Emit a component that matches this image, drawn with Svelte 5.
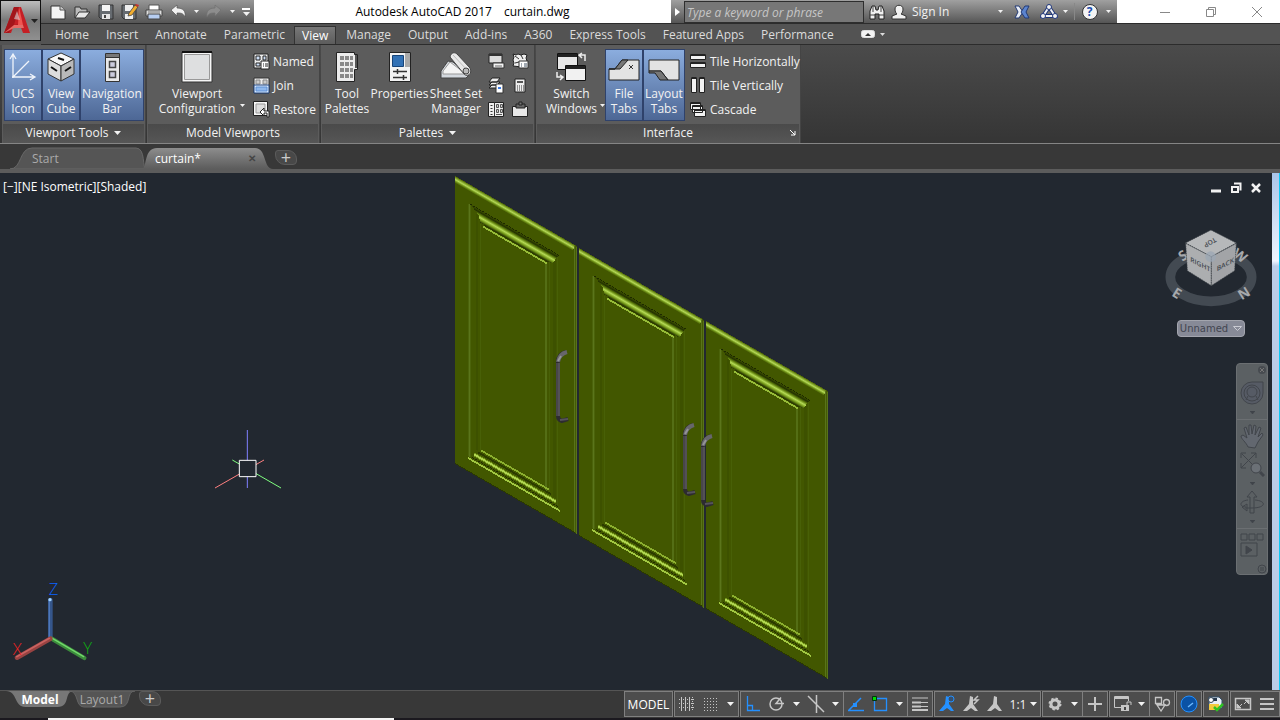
<script>
  let activeTab = $state('View');
  let search = $state('');

  const tabs = [
    'Home', 'Insert', 'Annotate', 'Parametric', 'View', 'Manage', 'Output',
    'Add-ins', 'A360', 'Express Tools', 'Featured Apps', 'Performance'
  ];

  const quickAccess = ['new', 'open', 'save', 'saveas', 'print', 'undo', 'caret', 'redo', 'caret', 'more'];

  // x/y is the top left corner of each door, w its width
  const doors = [
    { x: 455, y: 176, w: 122 },
    { x: 579, y: 248, w: 125 },
    { x: 706, y: 321, w: 122 }
  ];
  const handles = [
    { x: 558, y: 352 },
    { x: 685, y: 425 },
    { x: 703, y: 436 }
  ];

  const paletteTools = ['command line', 'markup set', 'layers', 'calculator', 'design center', 'clipboard'];

  const statusGroups = [
    ['grid', 'snap', 'drop'],
    ['ortho', 'polar', 'drop', 'iso', 'drop', 'sep', 'track', 'osnap', 'drop', 'sep', 'weight'],
    ['annovis', 'annoauto', 'anno', 'scale'],
    ['gear', 'drop', 'sep', 'plus'],
    ['lock', 'drop', 'sep', 'isolate'],
    ['hardware'],
    ['plot'],
    ['clean', 'menu']
  ];
</script>

{#snippet caret()}
  <svg class="caret" width="7" height="4" viewBox="0 0 7 4"><path d="M0 0h7L3.5 4z" fill="currentColor" /></svg>
{/snippet}

{#snippet quickIcon(name)}
  <svg width="18" height="18" viewBox="0 0 18 18">
    {#if name === 'new'}
      <path d="M2 3h9l5 4v9H2z" fill="#f4f4f4" stroke="#333" />
      <path d="M11 3v4h5" fill="#ccc" stroke="#555" />
    {:else if name === 'open'}
      <path d="M2 15V4h5l1 2h6v3" fill="#bbb" stroke="#333" />
      <path d="M2 15l4-6h11l-5 6z" fill="#e8e8e8" stroke="#333" />
    {:else if name === 'save'}
      <path d="M2 2h14v14H4l-2-2z" fill="#666b70" stroke="#333" />
      <path d="M5 2h8v6H5z" fill="#f4f4f4" /><path d="M5 11h8v5H5z" fill="#e5e5e5" />
      <path d="M7 12h2v3H7z" fill="#444" />
    {:else if name === 'saveas'}
      <path d="M1 2h14v14H3l-2-2z" fill="#666b70" stroke="#333" />
      <path d="M4 2h8v6H4zM4 11h8v5H4z" fill="#eee" />
      <path d="M7 13l1-3 6-8 3 2-6 8z" fill="#f2ad2e" stroke="#444" stroke-width=".8" />
      <path d="M14 2l3 2 1-2-3-1z" fill="#c9302c" />
    {:else if name === 'print'}
      <path d="M4 2h10v6H4z" fill="#fff" stroke="#555" />
      <path d="M1 7h16v6H1z" fill="#dedede" stroke="#444" />
      <path d="M3 11h12v5H3z" fill="#b7cdf0" stroke="#444" /><path d="M3 9h12" stroke="#777" />
    {:else if name === 'undo'}
      <path d="M2 7l6-5v3c6 0 9 3 8 9-2-4-4-4-8-4v3z" fill="#f1f1f1" stroke="#555" stroke-width=".7" />
    {:else}
      <path d="M16 7l-6-5v3C4 5 1 8 2 14c2-4 4-4 8-4v3z" fill="#8d8d8d" stroke="#707070" stroke-width=".7" />
    {/if}
  </svg>
{/snippet}

{#snippet paletteIcon(name)}
  <svg width="18" height="18" viewBox="0 0 18 18">
    {#if name === 'command line'}
      <path d="M2 2h13v9H2z" fill="#ddd" stroke="#222" /><path d="M2 2h13v2H2z" fill="#333" />
      <path d="M6 11h11v5H6z" fill="#f3f3f3" stroke="#333" /><path d="M8 14h7" stroke="#666" />
    {:else if name === 'markup set'}
      <path d="M2 2l3 1 2-1 3 1 3-1 3 1-1 3 1 3-2 2-3 4-9-1 1-3-1-3 1-3z" fill="#eee" stroke="#222" />
      <path d="M4 4l4 3M10 3l2 4M4 11l4-1" stroke="#333" />
      <path d="M8 9h9v7H8z" fill="#fff" stroke="#333" /><path d="M10 12h1m2 0h3m-6 2h1m2 0h3" stroke="#456" />
    {:else if name === 'layers'}
      <path d="M2 12l3-3h8l-3 3zM2 9l3-3h8l-3 3zM2 6l3-4h8l-3 4z" fill="#eee" stroke="#222" />
      <path d="M9 8h7v9H9z" fill="#fff" stroke="#333" /><path d="M11 11h3v2h-3z" fill="#3f7ee8" />
    {:else if name === 'calculator'}
      <path d="M4 3h10v13H4z" fill="#eee" stroke="#222" /><path d="M6 5h6v2H6z" fill="#555" />
      <path d="M6 10h7m-7 2h7m-7 2h7" stroke="#333" stroke-dasharray="1 1" />
    {:else if name === 'design center'}
      <path d="M1.500 2.500h15v14h-15z" fill="#eee" stroke="#222" /><path d="M7.500 2v14" stroke="#333" />
      <path d="M4.500 5v10" stroke="#333" stroke-width="2" stroke-dasharray="1 2" />
      <path d="M9.500 4.500h2v3h-2zm4 0h2v3h-2zm-4 5h2v3h-2zm4 0h2v3h-2zM9 14.500h6" fill="#ccc" stroke="#555" />
    {:else}
      <path d="M1.500 6.500h15v10h-15z" fill="#e8e8e8" stroke="#222" /><path d="M5 4h9v4H5z" fill="#666" stroke="#222" />
      <path d="M8 2h3v3H8z" fill="#777" stroke="#222" />
    {/if}
  </svg>
{/snippet}

{#snippet statusIcon(name)}
  <svg width="24" height="24" viewBox="0 0 24 24" fill="none" stroke="#c6c6c6">
    {#if name === 'grid'}
      <path d="M6.500 5v14m4-14v14m4-14v14" />
      <path d="M17.500 5v14M4 7.500h15M4 11.500h15M4 15.500h15" stroke-dasharray="1 1" />
    {:else if name === 'snap'}
      <path d="M5 6.500h14M5 9.500h14M5 12.500h14M5 15.500h14M5 18.500h14" stroke-dasharray="1 2" />
    {:else if name === 'ortho'}
      <path d="M6.500 4v14.500H19M6.500 13.500h5v5" stroke="#2490ff" stroke-width="1.300" />
    {:else if name === 'polar'}
      <circle cx="11" cy="12" r="6" stroke-width="1.500" /><path d="M19 11.500h-8l5-6" stroke-width="1.500" />
    {:else if name === 'iso'}
      <path d="M4 4l16 16M12.500 3v18" stroke-width="1.500" />
    {:else if name === 'track'}
      <path d="M4 18.500h16M5 18L17 6" stroke="#2490ff" stroke-width="1.500" /><path d="M9 11h4v4H9z" fill="#2490ff" stroke="none" />
    {:else if name === 'osnap'}
      <path d="M6.500 6.500h12v12h-12z" stroke="#2490ff" stroke-width="1.300" /><path d="M4.500 4.500h4v4h-4z" fill="#0d0" stroke="#031" />
    {:else if name === 'weight'}
      <path d="M4 6h16" /><path d="M4 10.500h9" stroke-width="2" /><path d="M13 10.500h7" /><path d="M4 14.500h16" stroke-width="1" /><path d="M4 14.500h9M4 18h16" stroke-width="2" />
    {:else if name === 'annovis' || name === 'annoauto' || name === 'anno'}
      <g fill={name === 'annovis' ? '#2490ff' : '#c6c6c6'} stroke="none">
        <path d="M11 4l3 1v7l5 7h-3l-4-3-4 3H4l6-7z" />
      </g>
      {#if name === 'annovis'}<circle cx="16" cy="7" r="3" fill="#38506c" stroke="#2490ff" />{/if}
      {#if name === 'annoauto'}<path d="M19 4l-4 4h4l-4 4" stroke-width="1.500" />{/if}
    {:else if name === 'gear'}
      <circle cx="12" cy="12" r="4" stroke-width="3" /><circle cx="12" cy="12" r="5.500" stroke-width="2" stroke-dasharray="2.300 2" />
    {:else if name === 'plus'}
      <path d="M5 12h14M12 5v14" stroke-width="2" />
    {:else if name === 'lock'}
      <path d="M11 15.500H4.500v-11h14V9" /><path d="M4 6h15" stroke-width="2" />
      <path d="M11 13h8v6h-8z" fill="#c6c6c6" stroke="none" /><path d="M17 13v-3h4v3" /><path d="M14 15h2v3h-2z" fill="#444" stroke="none" />
    {:else if name === 'isolate'}
      <path d="M5.500 5.500h6v6h-6zM11 19l-4-6h8z" stroke-width="1.300" /><circle cx="16.500" cy="10.500" r="3" stroke-width="1.300" />
    {:else if name === 'hardware'}
      <circle cx="12" cy="12" r="8" fill="#0a52a5" stroke="#2490ff" /><path d="M11 15l5-4" stroke="#6cbaff" stroke-width="1.500" />
    {:else if name === 'plot'}
      <path d="M5 5h10l3 3v8H5z" fill="#e8eef5" stroke="#33506d" /><path d="M8 6h5v3H8z" fill="#26374a" stroke="none" />
      <circle cx="7" cy="8" r="2.500" fill="#fff" stroke="#345" /><path d="M5 12h10v6H5z" fill="#f3ca3e" stroke="none" />
      <path d="M10 15l3 3 6-6" stroke="#2fc323" stroke-width="2.500" />
    {:else if name === 'clean'}
      <path d="M4.500 6.500h15v11h-15z" stroke-width="1.500" /><path d="M14 8h4v4zM6 12v4h4zM13 12l3-3M8 15l3-3" fill="#c6c6c6" />
    {:else}
      <path d="M5 7h14M5 12h14M5 17h14" stroke-width="2" />
    {/if}
  </svg>
{/snippet}

<div class="app">
  <header>
    <button class="logo" aria-label="Application menu">
      <svg width="28" height="34" viewBox="0 0 28 34">
        <path d="M1 29L11 3h7l9 26h-7l-3-8h-6l-3 8z" fill="#c51f25" />
        <path d="M11 3l5 0-5 18 8-1 2 4H9l-3 5H1z" fill="#a3161b" />
        <path d="M16 3l4 18h-5z" fill="#ef5550" /><path d="M11 15l3-8 3 9z" fill="#d9d9d9" opacity=".6" />
        <path d="M1 29l10-8h9l1 3H11z" fill="#e66a65" />
      </svg>
      {@render caret()}
    </button>
    <div class="title-row">
      <div class="quick">
        {#each quickAccess as name}
          {#if name === 'caret'}
            <button class="tiny" aria-label="History">{@render caret()}</button>
          {:else if name === 'more'}
            <button class="more" aria-label="Customize"><i></i>{@render caret()}</button>
          {:else}
            <button aria-label={name}>{@render quickIcon(name)}</button>
          {/if}
        {/each}
      </div>
      <div class="title"><span>Autodesk AutoCAD 2017</span><span>curtain.dwg</span></div>
      <div class="info">
        <button class="expand" aria-label="Collapse search"><svg width="5" height="8" viewBox="0 0 5 8"><path d="M0 0l5 4-5 4z" fill="#fff" /></svg></button>
        <input type="text" aria-label="Search" placeholder="Type a keyword or phrase" bind:value={search} />
        <button class="find" aria-label="Find">
          <svg width="18" height="18" viewBox="0 0 18 18">
            <path d="M2 8l2-5h3l1 4h2l1-4h3l2 5v8h-5v-5H7v5H2z" fill="#f0f0f0" stroke="#222" />
            <path d="M5 3v6m8-6v6M2 12h5m4 0h5" stroke="#444" />
          </svg>
        </button>
        <button class="sign">
          <svg width="18" height="18" viewBox="0 0 18 18"><path d="M5 6c0-5 8-5 8 0 0 3-1 4-2 5l5 2v3H2v-3l5-2C6 10 5 9 5 6z" fill="#f1f1f1" stroke="#333" /></svg>
          <span>Sign In</span>
          {@render caret()}
        </button>
        <button class="exchange" aria-label="Exchange">
          <svg width="16" height="14" viewBox="0 0 16 14"><path d="M1 1h4l4 6-4 6H1l3-6z" fill="#e8edf5" stroke="#233a75" /><path d="M15 1h-4L7 7l4 6h4l-3-6z" fill="#5b84cf" stroke="#233a75" /></svg>
        </button>
        <button class="connect" aria-label="Connect">
          <svg width="18" height="16" viewBox="0 0 18 16">
            <path d="M9 3l6 9H3z" fill="none" stroke="#20377b" stroke-width="4" /><path d="M9 3l6 9H3z" fill="none" stroke="#f3f3f3" stroke-width="2" />
            <g fill="#f3f3f3" stroke="#20377b"><circle cx="9" cy="3" r="2.500" /><circle cx="3" cy="12" r="2.500" /><circle cx="15" cy="12" r="2.500" /></g>
          </svg>
          {@render caret()}
        </button>
        <button class="help" aria-label="Help"><b>?</b>{@render caret()}</button>
      </div>
      <div class="window">
        <button aria-label="Minimize"><svg width="12" height="12" viewBox="0 0 12 12"><path d="M1 6.500h10" /></svg></button>
        <button aria-label="Restore"><svg width="12" height="12" viewBox="0 0 12 12"><path d="M1.500 3.500h7v7h-7zM3.500 3V1.500h7v7H9" /></svg></button>
        <button aria-label="Close"><svg width="12" height="12" viewBox="0 0 12 12"><path d="M1 1l10 10M11 1L1 11" /></svg></button>
      </div>
    </div>
    <nav class="tabs">
      {#each tabs as tab}
        <button class:active={tab === activeTab} onclick={() => (activeTab = tab)}>{tab}</button>
      {/each}
      <button class="collapse" aria-label="Minimize ribbon">
        <svg width="14" height="8" viewBox="0 0 14 8"><rect x=".5" y=".5" width="13" height="7" rx="2" fill="#f3f3f3" stroke="#ddd" /><path d="M4 6l3-3 3 3z" fill="#333" /></svg>
        {@render caret()}
      </button>
    </nav>
  </header>

  <section class="ribbon">
    <div class="panel viewport-tools">
      <div class="tools">
        <button class="big on">
          <svg width="32" height="32" viewBox="0 0 32 32"><path d="M6 27V4M3 8l3-5 3 5M5 26h22m-4-3l5 3-5 3M6 26L22 10" fill="none" stroke="#f0f4fa" stroke-width="1.300" /></svg>
          <span>UCS<br />Icon</span>
        </button>
        <button class="big on">
          <svg width="32" height="32" viewBox="0 0 32 32" stroke="#333" stroke-linejoin="round">
            <path d="M16 2l13 6-13 7L3 8z" fill="#f8f8f8" /><path d="M3 8l13 7v15L3 23z" fill="#ddd" /><path d="M29 8l-13 7v15l13-7z" fill="#b9b9b9" />
            <path d="M13 7l6 2M6 16l6 4M20 20l6-4" stroke="#111" stroke-width="2" />
          </svg>
          <span>View<br />Cube</span>
        </button>
        <button class="big on">
          <svg width="32" height="32" viewBox="0 0 32 32">
            <path d="M9.500 2.500h14v28h-14z" fill="#e9e9e9" stroke="#333" /><path d="M10 3h13v3H10z" fill="#777" /><path d="M10 6.500h13" stroke="#333" />
            <path d="M13.500 10.500h6v6h-6zM13.500 20.500h6v6h-6z" fill="#ccd" stroke="#444" stroke-width="1.500" />
          </svg>
          <span>Navigation<br />Bar</span>
        </button>
      </div>
      <h2>Viewport Tools {@render caret()}</h2>
    </div>

    <div class="panel model">
      <div class="tools">
        <button class="big">
          <svg width="32" height="32" viewBox="0 0 32 32"><path d="M1 1h30v30H1z" fill="#f7f7f7" stroke="#333" /><path d="M3.500 3.500h25v25h-25z" fill="#dedfe0" stroke="#999" /><path d="M1 1h30" stroke="#111" stroke-width="2" /></svg>
          <span>Viewport<br />Configuration</span>
          <em>{@render caret()}</em>
        </button>
        <div class="list">
          <button>
            <svg width="18" height="18" viewBox="0 0 18 18" stroke="#222"><path d="M2 2h14v14H2z" fill="#eee" /><path d="M4 4h4v4H4zM11 4h3v4h-3zM4 11h4v3H4z" fill="#cfe0f7" /><path d="M9 9h8v8H9z" fill="#fff" /><path d="M11 12h1m1 0h3m-5 2h1m1 0h3" /></svg>
            Named
          </button>
          <button>
            <svg width="18" height="18" viewBox="0 0 18 18" stroke="#333"><path d="M2 2h15v15H2z" fill="#eee" /><path d="M4 4h4v4H4zM11 4h4v4h-4z" fill="#ccc" stroke="#888" /><path d="M2 9h15v8H2z" fill="#d7e9ff" stroke="#25477f" /><path d="M4 11h11v4H4z" fill="#8fb8ed" stroke="#5c8fd4" /></svg>
            Join
          </button>
          <button>
            <svg width="18" height="18" viewBox="0 0 18 18" stroke="#222"><path d="M1.500 1.500h14v14h-14z" fill="#f6f6f6" /><path d="M4 4h9v9H4z" fill="#ddd" stroke="#999" /><path d="M8 12l4-4v3h5v6h-2v-4h-3v3z" fill="#fff" /></svg>
            Restore
          </button>
        </div>
      </div>
      <h2>Model Viewports</h2>
    </div>

    <div class="panel palettes">
      <div class="tools">
        <button class="big">
          <svg width="32" height="32" viewBox="0 0 32 32">
            <path d="M5.500 1.500h18v2h3v15h-3v12h-18z" fill="#ececec" stroke="#222" /><path d="M24 4h2v13h-2z" fill="#555" />
            <path d="M9 5h4v4H9zm5 0h4v4h-4zm5 0h3v4h-3zM9 11h4v4H9zm5 0h4v4h-4zm5 0h3v4h-3zM9 17h4v4H9zm5 0h4v4h-4zm5 0h3v4h-3zM9 23h4v4H9zm5 0h4v4h-4zm5 0h3v4h-3z" fill="#888" />
          </svg>
          <span>Tool<br />Palettes</span>
        </button>
        <button class="big">
          <svg width="32" height="32" viewBox="0 0 32 32">
            <path d="M5.500 1.500h21v29h-21z" fill="#f3f3f3" stroke="#222" /><path d="M8.500 4.500h11v11h-11z" fill="#3271b5" stroke="#164479" /><path d="M21 2h5v14h-5z" fill="#aaa" />
            <path d="M9 20.500h14M9 26.500h14M13.500 18v5m6 1v5" stroke="#333" stroke-width="1.500" />
          </svg>
          <span>Properties</span>
        </button>
        <button class="big">
          <svg width="32" height="32" viewBox="0 0 32 32" stroke="#444">
            <path d="M1 20l7-10 5 1 16 13-3 3H1z" fill="#d4d9df" /><path d="M3 20l7-9 16 12H3z" fill="#f4f4f4" stroke="#999" />
            <path d="M10 6c1-5 5-5 7-3l13 14c3 7-4 9-6 6z" fill="#e8e8e8" /><path d="M13 4l14 15" stroke="#bbb" /><circle cx="26" cy="20" r="3" fill="#bbb" />
          </svg>
          <span>Sheet Set<br />Manager</span>
        </button>
        <div class="icon-grid">
          {#each paletteTools as name}
            <button aria-label={name}>{@render paletteIcon(name)}</button>
          {/each}
        </div>
      </div>
      <h2>Palettes {@render caret()}</h2>
    </div>

    <div class="panel interface">
      <div class="tools">
        <button class="big">
          <svg width="32" height="32" viewBox="0 0 32 32">
            <path d="M1.500 2.500h20v16h-20z" fill="#e8e8e8" stroke="#111" /><path d="M2 3h19v3H2z" fill="#222" />
            <path d="M9.500 14.500h20v15h-20z" fill="#f1f1f1" stroke="#111" /><path d="M10 15h19v3H10z" fill="#222" />
            <path d="M24 4h5v6M26 2l-3 2 3 3M1 21v5h5m-2-2l3 2-3 3" fill="none" stroke="#eee" stroke-width="1.500" />
          </svg>
          <span>Switch<br />Windows</span>
          <em>{@render caret()}</em>
        </button>
        <button class="big on">
          <svg width="32" height="32" viewBox="0 0 32 32"><path d="M1 29V18h6l7-9h17v20z" fill="#e3e3e3" stroke="#222" /><path d="M1 18h6l7-9h6l-8 9z" fill="#777" stroke="#222" /><path d="M21 14l4 4m0-4l-4 4" stroke="#333" /></svg>
          <span>File<br />Tabs</span>
        </button>
        <button class="big on">
          <svg width="32" height="32" viewBox="0 0 32 32"><path d="M1 9h30v20H20l-7-9H1z" fill="#e3e3e3" stroke="#222" /><path d="M1 20h12l7 9h-8l-5-7H1z" fill="#777" stroke="#222" /></svg>
          <span>Layout<br />Tabs</span>
        </button>
        <div class="list">
          <button><svg width="18" height="18" viewBox="0 0 18 18"><path d="M1.500 2.500h15v5h-15zM1.500 10.500h15v5h-15z" fill="#f2f2f2" stroke="#222" /><path d="M2 3.500h14M2 11.500h14" stroke="#222" /></svg>Tile Horizontally</button>
          <button><svg width="18" height="18" viewBox="0 0 18 18"><path d="M2.500 1.500h5v15h-5zM10.500 1.500h5v15h-5z" fill="#f2f2f2" stroke="#222" /><path d="M3 2.500h4M11 2.500h4" stroke="#222" /></svg>Tile Vertically</button>
          <button><svg width="18" height="18" viewBox="0 0 18 18" fill="#f2f2f2" stroke="#222"><path d="M1.500 2.500h10v7h-10zM3.500 5.500h10v7h-10zM5.500 9.500h11v7h-11z" /><path d="M2 3.500h9M4 6.500h9M6 10.500h10" /></svg>Cascade</button>
        </div>
      </div>
      <h2>Interface <button class="launcher" aria-label="Interface options"><svg width="6" height="6" viewBox="0 0 6 6"><path d="M0 0l5 5M5 1v4H1" fill="none" stroke="#fff" /></svg></button></h2>
    </div>
  </section>

  <nav class="files">
    <button class="file">
      <svg viewBox="0 0 136 22" preserveAspectRatio="none"><path d="M0 22C12 22 9 1 22 1h104c10 0 6 21 10 21z" fill="#555" stroke="#686868" /></svg>
      <span>Start</span>
    </button>
    <button class="file current">
      <svg viewBox="0 0 130 22" preserveAspectRatio="none">
        <defs><linearGradient id="file-on" x2="0" y2="1"><stop stop-color="#8d8d8d" /><stop offset="1" stop-color="#5c5c5c" /></linearGradient></defs>
        <path d="M0 22C4 16 2 1 14 1h98c12 0 8 21 18 21z" fill="url(#file-on)" />
      </svg>
      <span>curtain*</span>
      <b>✕</b>
    </button>
    <button class="add" aria-label="New drawing">+</button>
  </nav>

  <main>
    <div class="canvas">
      <svg class="model-view" viewBox="0 173 1272 517" aria-label="Cabinet doors">
        <defs>
          <linearGradient id="edge" x2="0" y2="1"><stop stop-color="#455c02" /><stop offset=".25" stop-color="#83a42a" /><stop offset=".5" stop-color="#b4d957" /><stop offset=".75" stop-color="#6f9217" /><stop offset="1" stop-color="#425700" /></linearGradient>
          <linearGradient id="cove" x2="0" y2="1"><stop stop-color="#415600" /><stop offset=".25" stop-color="#243200" /><stop offset=".42" stop-color="#5f7f0d" /><stop offset=".62" stop-color="#b5db55" /><stop offset=".8" stop-color="#799d1d" /><stop offset="1" stop-color="#2a3900" /></linearGradient>
        </defs>
        {#each doors as { x, y, w }}
          <g transform="matrix(1 .575 0 1 {x} {y})" shape-rendering="crispEdges">
            <path d="M0 0H{w}V288H0z" fill="#425700" />
            <path d="M{w - 3} 1h3V288h-3z" fill="#58731a" />
            <path d="M{w - 2} 1V288" stroke="#445b04" />
            <path d="M0 0H{w - 2}L{w - 4} 7H0z" fill="url(#edge)" />
            <path d="M13 20h3v252h-3z" fill="#4b630b" /><path d="M14.500 20V273" stroke="#5b751b" />
            <path d="M21 26h2v236h-2zM{w - 24} 27h3v237h-3z" fill="#3d5100" />
            <path d="M25.500 33v226M{w - 27.500} 32v231M{w - 19.500} 22v248" stroke="#486007" />
            <path d="M{w - 32} 35h2V262h-2z" fill="#546e15" />
            <path d="M15 19H{w - 18}L{w - 25} 32H25L24 26z" fill="url(#cove)" />
            <path d="M15 19.500H{w - 17}" stroke="#1e2900" stroke-dasharray="2 1" />
            <path d="M28 34.500H{w - 30}" stroke="#96bb38" stroke-width="2" />
            <path d="M29 32.500H{w - 29}" stroke="#2c3b00" />
            <path d="M26 259.500H{w - 28}" stroke="#8baf2e" stroke-width="2" />
            <path d="M23 263H{w - 26}" stroke="#2b3a00" stroke-width="2" />
            <path d="M19 267.500H{w - 21}" stroke="#719319" stroke-width="4" />
            <path d="M19 267.500H{w - 21}" stroke="#b0d650" stroke-width="2" />
            <path d="M17 271.500H{w - 19}" stroke="#202b00" stroke-dasharray="2 1" />
            <path d="M13 274.500H{w - 17}" stroke="#a1c741" stroke-width="2" />
            <path d="M0 287.500H{w - 2}" stroke="#2a3800" />
          </g>
        {/each}
        {#each handles as { x, y }}
          <g transform="translate({x} {y})" fill="none">
            <path d="M8 0Q0 2 0 10V64Q0 68 4 69L10 67" stroke="#2d2b30" stroke-width="4" />
            <path d="M0 11V64" stroke="#48464b" stroke-width="4" />
            <path d="M1 11V64" stroke="#5e5c61" />
            <path d="M9 0Q1 2 0 10" stroke="#67666b" stroke-width="4" />
            <path d="M3 4L0 9" stroke="#949497" stroke-width="2" />
            <path d="M2 68l8-1" stroke="#55535a" stroke-width="2" />
          </g>
        {/each}
      </svg>

      <div class="view-label">[−][NE Isometric][Shaded]</div>

      <svg class="cursor" width="70" height="62" viewBox="639 24 210 186" fill="none" stroke-width="3">
        <path d="M742 30v174" stroke="#8080ff" /><path d="M645 204l147-84" stroke="#ff8080" /><path d="M697 120l146 84" stroke="#80ff80" />
        <path d="M718 121h50v49h-50z" stroke="#fff" fill="#222830" />
      </svg>

      <svg class="ucs" width="90" height="104" viewBox="30 420 270 312" stroke-linecap="round">
        <text x="146" y="524" fill="#0a63ff">Z</text>
        <path d="M151 540V656" stroke="#35568b" stroke-width="14" /><path d="M148 540V650" stroke="#4d77b9" stroke-width="4" /><circle cx="150" cy="539" r="5" fill="#9fd2ff" />
        <path d="M155 656l98 58" stroke="#3c8c3c" stroke-width="13" /><path d="M157 655l94 55" stroke="#72d96c" stroke-width="4" />
        <path d="M151 656L51 713" stroke="#994342" stroke-width="14" /><path d="M148 655L50 710" stroke="#ca6361" stroke-width="5" />
        <text x="38" y="704" fill="#f02222">X</text><text x="250" y="701" fill="#0fae10">Y</text>
      </svg>

      <div class="drawing-controls">
        <button aria-label="Minimize drawing"><svg width="12" height="12" viewBox="0 0 12 12"><path d="M1 9h10" stroke-width="3" /></svg></button>
        <button aria-label="Restore drawing"><svg width="12" height="12" viewBox="0 0 12 12"><path d="M2 5h6v5H2zM4 1.500h6.500v7" stroke-width="2" /></svg></button>
        <button aria-label="Close drawing"><svg width="12" height="12" viewBox="0 0 12 12"><path d="M2 2l8 8M10 2l-8 8" stroke-width="2.500" /></svg></button>
      </div>

      <div class="view-cube">
        <svg width="100" height="88" viewBox="63 160 300 264">
          <ellipse cx="213" cy="322" rx="122" ry="73" fill="none" stroke="#434a52" stroke-width="29" />
          <g class="compass"><text x="116" y="272" transform="rotate(-35 128 256)">S</text><text x="280" y="272" transform="rotate(35 300 258)">W</text><text x="99" y="386" transform="rotate(32 112 371)">E</text><text x="295" y="386" transform="rotate(-32 311 371)">N</text></g>
          <g stroke="#333940" stroke-width="2" stroke-dasharray="5 2">
            <path d="M213 181l76 39-75 41-78-41z" fill="#b6b8ba" /><path d="M137 221l77 40v87l-72-45z" fill="#acaeb0" /><path d="M289 221l-75 40v87l70-45z" fill="#a2a4a7" />
          </g>
          <circle cx="212" cy="261" r="16" fill="#9ba7b4" opacity=".75" />
          <g class="faces"><text x="151" y="275" transform="skewY(28) translate(0 -80)">RIGHT</text><text x="230" y="305" transform="skewY(-28) translate(0 122)">BACK</text><text x="196" y="226" transform="rotate(150 213 218)">TOP</text></g>
        </svg>
        <button>Unnamed <svg width="9" height="6" viewBox="0 0 9 6"><path d="M.5.500h8l-4 4z" fill="none" stroke="#c9cad2" /></svg></button>
      </div>

      <div class="nav-bar">
        <button class="end" aria-label="Close"><svg width="10" height="10" viewBox="0 0 10 10"><circle cx="5" cy="5" r="4" fill="#474b50" stroke="none" /><path d="M3 3l4 4m0-4L3 7" stroke="#777" /></svg></button>
        <button aria-label="Steering wheel"><svg width="26" height="26" viewBox="0 0 26 26"><path d="M13 2h11v11a11 11 0 1 1-11-11z" fill="#565b65" /><circle cx="13" cy="13" r="8" /><circle cx="13" cy="12" r="5" /><path d="M9 16l-2 4m10-4l2 4" /></svg></button>
        <button class="small" aria-label="Wheel options">{@render caret()}</button>
        <hr />
        <button aria-label="Pan"><svg width="26" height="26" viewBox="0 0 26 26"><path d="M9 24C7 19 2 16 2 13l2-1 4 3L5 5l2-1 3 8V2h2l1 9 2-9 2 1-1 9 4-8 2 1-3 9 4-4 1 2-5 7-3 6z" fill="#62676f" /></svg></button>
        <button aria-label="Zoom"><svg width="26" height="26" viewBox="0 0 26 26"><path d="M3 3l13 13M2 7V2h5M12 2h5v5M7 17H2v-5M17 2L2 17" /><circle cx="17" cy="17" r="5" fill="#6b7076" /><path d="M21 21l4 4" stroke-width="3" /></svg></button>
        <button class="small" aria-label="Zoom options">{@render caret()}</button>
        <button aria-label="Orbit"><svg width="26" height="26" viewBox="0 0 26 26"><path d="M11 24V8H8l5-6 5 6h-3v16zM16 11c12 1 11 8-3 8H6" /><path d="M9 11C0 12 0 18 7 18M8 15l-5 3 5 4z" /></svg></button>
        <button class="small" aria-label="Orbit options">{@render caret()}</button>
        <hr />
        <button aria-label="Show motion"><svg width="26" height="26" viewBox="0 0 26 26"><path d="M2 2h6v6H2zM10 2h6v6h-6zM18 2h6v6h-6zM2 11h16v13H2z" /><path d="M7 14l6 4-6 4z" fill="#41454b" /></svg></button>
        <button class="end" aria-label="Customize"><svg width="10" height="10" viewBox="0 0 10 10"><circle cx="5" cy="5" r="4" /><path d="M3 4h4M3 6h4" /></svg></button>
      </div>
    </div>
    <div class="edge"></div>
  </main>

  <footer>
    <nav class="layouts">
      <button class="current">
        <svg viewBox="0 0 70 18" preserveAspectRatio="none"><path d="M0 0c12 0 8 17 20 17h33C67 17 59 0 70 0z" fill="#777" /></svg>
        <span>Model</span>
      </button>
      <button class="layout">
        <svg viewBox="0 0 70 18" preserveAspectRatio="none"><path d="M0 0c11 0 6 17 16 17h38C67 17 60 0 70 0z" fill="#555" stroke="#666" /></svg>
        <span>Layout1</span>
      </button>
      <button class="add" aria-label="New layout">+</button>
    </nav>
    <div class="status">
      <div class="group"><button class="space">MODEL</button></div>
      {#each statusGroups as group}
        <div class="group">
          {#each group as name}
            {#if name === 'sep'}
              <i></i>
            {:else if name === 'drop'}
              <button class="drop" aria-label="Options">{@render caret()}</button>
            {:else if name === 'scale'}
              <button class="scale">1:1 {@render caret()}</button>
            {:else}
              <button class="tool" aria-label={name}>{@render statusIcon(name)}</button>
            {/if}
          {/each}
        </div>
      {/each}
    </div>
  </footer>
  <div class="taskbar"><i></i></div>
</div>

<style>
  :global(body) {
    background: #222830;
  }

  .app {
    display: flex;
    flex-direction: column;
    min-height: 100vh;
    overflow: hidden;
    font: 12px/15px 'Open Sans', 'Noto Sans', sans-serif;
    color: #f2f2f2;
  }

  button {
    display: flex;
    align-items: center;
    justify-content: center;
    padding: 0;
    border: 0;
    background: none;
    color: inherit;
    font: inherit;
    white-space: nowrap;
  }

  svg {
    display: block;
    flex: none;
  }

  header {
    display: grid;
    grid-template-columns: 41px 1fr;
    grid-template-rows: 24px 21px;
    background: #535353;
  }

  .logo {
    grid-row: 1 / 3;
    height: 41px;
    box-sizing: border-box;
    border: 1px solid #111;
    background: linear-gradient(#bdbdbd, #777 50%, #909090);
    color: #222;
  }

  .title-row {
    display: flex;
    background: #fff;
    border-bottom: 1px solid #2c2c2c;
    box-sizing: border-box;
  }

  .quick {
    display: flex;
    align-items: center;
    width: 213px;
    padding-left: 5px;
    box-sizing: border-box;
    background: linear-gradient(#979797, #555);
  }

  .quick button {
    width: 24px;
  }

  .quick .tiny {
    width: 12px;
  }

  .quick .more {
    flex-direction: column;
    gap: 2px;
    width: 16px;
  }

  .more i {
    width: 8px;
    height: 2px;
    background: #fff;
  }

  .tiny .caret,
  .sign .caret,
  .connect .caret,
  .help .caret {
    width: 5px;
    height: 3px;
  }

  .title {
    display: flex;
    flex: 1;
    align-items: center;
    justify-content: center;
    gap: 12px;
    color: #000;
    white-space: nowrap;
  }

  .info {
    display: flex;
    width: 446px;
    background: linear-gradient(#a0a0a0, #555);
  }

  .expand {
    width: 13px;
  }

  input {
    width: 180px;
    height: 22px;
    margin-top: 1px;
    padding: 0 2px;
    box-sizing: border-box;
    border: 1px solid #2e2e2e;
    background: #777;
    color: #fff;
    font: italic 12px/15px 'Open Sans', 'Noto Sans', sans-serif;
  }

  input::placeholder {
    color: #c6c6c6;
    opacity: 1;
  }

  .find {
    width: 26px;
  }

  .sign {
    gap: 4px;
    width: 113px;
  }

  .sign .caret {
    margin-left: auto;
  }

  .exchange {
    width: 37px;
  }

  .connect {
    gap: 5px;
    width: 28px;
  }

  .help {
    flex: 1;
    gap: 8px;
    margin: 3px 0 3px 6px;
    border-left: 1px solid #888;
  }

  .help b {
    width: 14px;
    height: 14px;
    border: 1px solid #333;
    border-radius: 50%;
    background: #f4f4f4;
    color: #1c4eae;
    font-size: 12px;
    line-height: 14px;
  }

  .window {
    display: flex;
    width: 163px;
    justify-content: flex-end;
  }

  .window button {
    width: 46px;
  }

  .window svg {
    fill: none;
    stroke: #888;
  }

  .tabs {
    display: flex;
    padding-left: 6px;
    border-bottom: 1px solid #2c2c2c;
  }

  .tabs button {
    padding: 0 9px 0 8px;
    color: #dcdcdc;
  }

  .tabs .active {
    margin: 2px 2px 0 0;
    padding: 0 7px;
    border: 1px solid #333;
    border-bottom: 0;
    background: linear-gradient(#787878, #5c5c5c);
    color: #fff;
  }

  .tabs .collapse {
    gap: 5px;
    margin-left: 10px;
  }

  .collapse .caret {
    width: 5px;
    height: 3px;
  }

  .ribbon {
    display: flex;
    gap: 1px;
    height: 98px;
    padding-left: 2px;
    background: linear-gradient(#4b4b4b, #353535);
    border-bottom: 1px solid #858585;
  }

  .panel {
    display: flex;
    flex-direction: column;
    border-right: 1px solid #444;
    background: #5c5c5c;
  }

  .tools {
    display: flex;
    flex: 1;
    padding: 4px 2px 3px;
  }

  .big {
    position: relative;
    flex-direction: column;
    justify-content: flex-start;
    gap: 3px;
    box-sizing: border-box;
    padding-top: 2px;
    text-align: center;
  }

  .big.on {
    border: 1px solid #2f426b;
    padding-top: 1px;
    background: linear-gradient(#8badde, #4d6795);
  }

  .big em {
    position: absolute;
    right: 0;
    bottom: 14px;
  }

  .big em svg {
    width: 5px;
    height: 3px;
  }

  h2 {
    position: relative;
    display: flex;
    align-items: center;
    justify-content: center;
    gap: 6px;
    height: 17px;
    margin: 0 1px;
    padding-bottom: 2px;
    background: linear-gradient(#4a4a4a, #565656);
    font-size: 12px;
    font-weight: 400;
  }

  .launcher {
    position: absolute;
    right: 3px;
  }

  .viewport-tools .tools {
    display: grid;
    grid-template-columns: 38px 38px 64px;
    padding-right: 1px;
  }

  .model .tools {
    display: grid;
    grid-template-columns: 96px 72px;
  }

  .palettes .tools {
    display: grid;
    grid-template-columns: 48px 57px 56px 48px;
  }

  .interface .tools {
    display: grid;
    grid-template-columns: 67px 38px 42px 115px;
    padding-right: 0;
  }

  .list {
    display: grid;
    grid-template-rows: repeat(3, 24px);
    padding-left: 4px;
  }

  .model .list {
    padding-left: 7px;
  }

  .list button {
    justify-content: flex-start;
    gap: 3px;
  }

  .icon-grid {
    display: grid;
    grid-template-columns: 24px 24px;
    grid-template-rows: repeat(3, 24px);
  }

  .files {
    display: flex;
    align-items: flex-end;
    height: 25px;
    padding: 0 10px;
    background: #383838;
    border-bottom: 4px solid #5c5c5c;
  }

  .file {
    position: relative;
    justify-content: flex-start;
    width: 136px;
    height: 22px;
    padding-left: 22px;
    box-sizing: border-box;
    color: #aaa;
  }

  .file svg {
    position: absolute;
    inset: 0;
    width: 100%;
    height: 100%;
  }

  .file.current {
    justify-content: space-between;
    width: 130px;
    margin-left: -3px;
    padding: 0 17px 0 12px;
    color: #fff;
  }

  .file span,
  .file b {
    position: relative;
  }

  .file b {
    color: #454545;
    font-size: 10px;
  }

  .files .add,
  .layouts .add {
    width: 22px;
    height: 15px;
    border: 1px solid #5b5b5b;
    border-radius: 3px 9px 4px 10px;
    background: #484848;
    color: #ccc;
    font-size: 18px;
    line-height: 13px;
  }

  .files .add {
    margin: 0 0 4px 2px;
  }

  main {
    display: flex;
    flex: 1;
    min-height: 430px;
  }

  .canvas {
    position: relative;
    flex: 1;
    background: #222830;
  }

  .edge {
    width: 7px;
    border-right: 1px solid #0cc8f5;
    background: linear-gradient(#a9c5e9, #eef5ff 17%, #b9cde8 18%);
  }

  .model-view {
    position: absolute;
    inset: 0;
    width: 100%;
    height: 100%;
  }

  .view-label {
    position: absolute;
    top: 6px;
    left: 3px;
    color: #fff;
  }

  .cursor {
    position: absolute;
    top: 255px;
    left: 213px;
  }

  .ucs {
    position: absolute;
    bottom: 26px;
    left: 10px;
  }

  .ucs text {
    font-size: 50px;
    font-weight: 300;
  }

  .drawing-controls {
    position: absolute;
    top: 9px;
    right: 10px;
    display: flex;
    gap: 8px;
  }

  .drawing-controls svg {
    fill: none;
    stroke: #f2f2f2;
  }

  .view-cube {
    position: absolute;
    top: 50px;
    right: 11px;
    display: grid;
    justify-items: center;
    gap: 9px;
  }

  .compass text {
    fill: #a7a9ac;
    font-size: 42px;
    font-weight: 700;
  }

  .faces text {
    fill: #454a50;
    font-size: 20px;
    font-weight: 600;
  }

  .view-cube button {
    gap: 5px;
    width: 68px;
    height: 17px;
    border: 1px solid #a3a5ae;
    border-radius: 4px;
    background: #878a97;
    color: #424550;
    font: 10px/15px 'DejaVu Sans', sans-serif;
  }

  .nav-bar {
    position: absolute;
    top: 190px;
    right: 4px;
    display: flex;
    flex-direction: column;
    align-items: center;
    width: 30px;
    border: 1px solid #6b6f72;
    border-radius: 4px;
    background: #5b6063;
    color: #3f4349;
  }

  .nav-bar svg {
    fill: none;
    stroke: #41454b;
  }

  .nav-bar button {
    height: 28px;
  }

  .nav-bar .small {
    height: 10px;
  }

  .nav-bar .small svg {
    width: 5px;
    height: 3px;
  }

  .nav-bar .end {
    align-self: flex-end;
    height: 11px;
  }

  .nav-bar .end:first-child {
    margin-bottom: 4px;
  }

  .nav-bar .end:last-child {
    margin-top: 4px;
  }

  .nav-bar hr {
    width: 100%;
    margin: 2px 0;
    border: 0;
    border-top: 1px solid #6b6f72;
  }

  footer {
    display: flex;
    justify-content: space-between;
    height: 27px;
    border-top: 1px solid #555;
    background: #383838;
  }

  .layouts {
    display: flex;
    padding-left: 6px;
  }

  .layouts button {
    position: relative;
    width: 66px;
    height: 17px;
    color: #aaa;
  }

  .layouts .current {
    width: 68px;
    color: #fff;
    font-weight: 700;
  }

  .layouts .layout {
    margin-left: -5px;
  }

  .layouts button > svg {
    position: absolute;
    inset: 0;
    width: 100%;
    height: 100%;
  }

  .layouts span {
    position: relative;
  }

  .layouts .add {
    width: 22px;
    height: 15px;
    margin-left: 4px;
  }

  .status {
    display: flex;
    gap: 1px;
  }

  .group {
    display: flex;
    height: 24px;
    border: 1px solid #808080;
    background: #4d4d4d;
  }

  .group > i {
    width: 1px;
    background: #808080;
  }

  .space {
    width: 47px;
    color: #fff;
  }

  .tool {
    width: 24px;
  }

  .drop {
    width: 15px;
  }

  .scale {
    gap: 4px;
    width: 33px;
  }

  .taskbar {
    height: 2px;
    background: #1b191f;
  }

  .taskbar i {
    display: block;
    width: 27%;
    height: 2px;
    margin-left: 48px;
    background: #f4f4f4;
  }
</style>
